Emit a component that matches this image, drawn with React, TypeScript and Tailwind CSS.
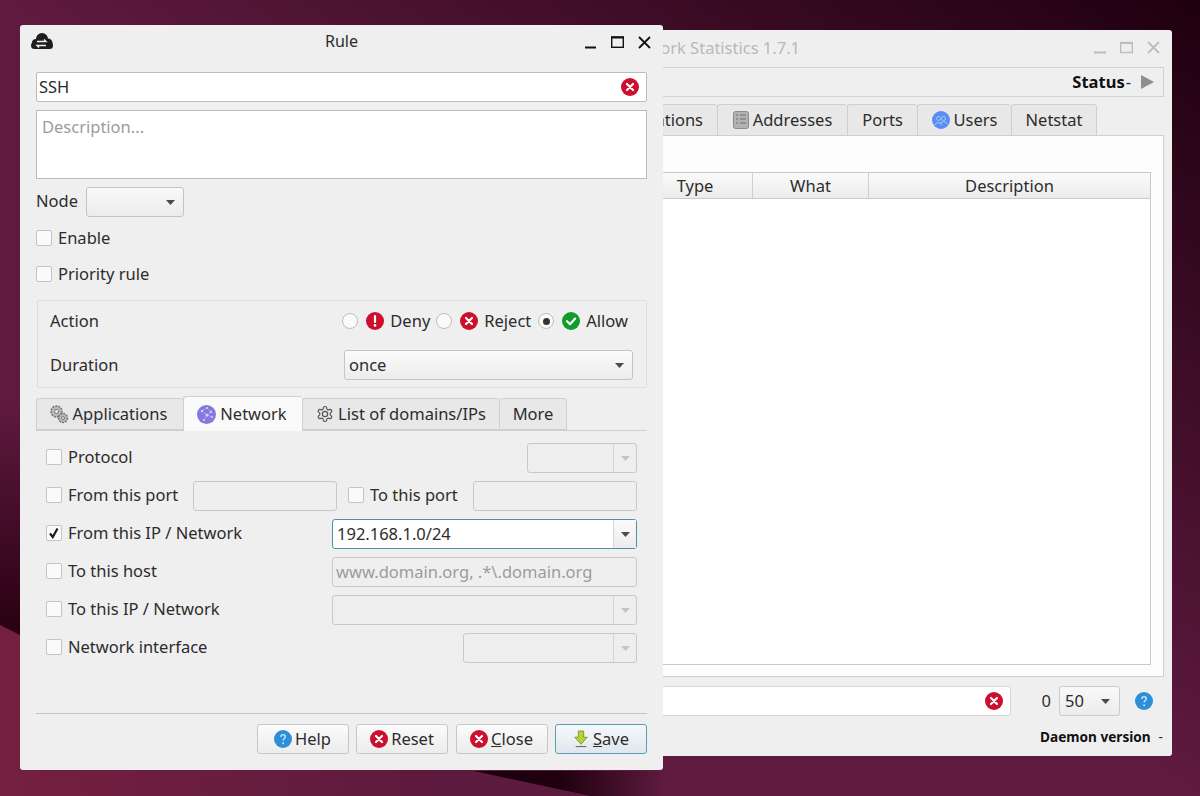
import type { ReactNode } from "react";

function ErrorIcon({ size = 18 }: { size?: number }) {
  return (
    <svg width={size} height={size} viewBox="0 0 18 18" className="shrink-0">
      <circle cx="9" cy="9" r="9" fill="#cc0f2c" />
      <path d="M6 6l6 6M12 6l-6 6" stroke="#fff" strokeWidth="2.2" strokeLinecap="round" />
    </svg>
  );
}

function DenyIcon() {
  return (
    <svg width="18" height="18" viewBox="0 0 18 18" className="shrink-0">
      <circle cx="9" cy="9" r="9" fill="#cc0f2c" />
      <path d="M9 4v6" stroke="#fff" strokeWidth="2.2" strokeLinecap="round" />
      <circle cx="9" cy="13.4" r="1.3" fill="#fff" />
    </svg>
  );
}

function AllowIcon() {
  return (
    <svg width="18" height="18" viewBox="0 0 18 18" className="shrink-0">
      <circle cx="9" cy="9" r="9" fill="#119a2e" />
      <path d="M5 9.2l3 3 5.2-5.6" stroke="#fff" strokeWidth="2.2" fill="none" strokeLinecap="round" strokeLinejoin="round" />
    </svg>
  );
}

function HelpIcon() {
  return (
    <svg width="18" height="18" viewBox="0 0 18 18" className="shrink-0">
      <circle cx="9" cy="9" r="9" fill="#2f8fd6" />
      <path d="M6.8 7c0-1.400 1-2.200 2.300-2.200s2.200.8 2.200 2c0 1.700-2.200 1.800-2.200 3.700" stroke="#bfe3fb" strokeWidth="1.5" fill="none" />
      <circle cx="9.1" cy="13.3" r="1" fill="#bfe3fb" />
    </svg>
  );
}

function Caret({ muted }: { muted?: boolean }) {
  return (
    <svg width="9" height="5" viewBox="0 0 9 5">
      <path d="M0 0h9L4.5 5z" fill={muted ? "#c4c4c4" : "#4a4a4a"} />
    </svg>
  );
}

function Check({ checked }: { checked?: boolean }) {
  return (
    <span className="w-4 h-4 shrink-0 bg-[#fafafa] border border-[#c4c4c4] rounded-[2px] flex items-center justify-center">
      {checked && (
        <svg width="12" height="12" viewBox="0 0 12 12">
          <path d="M2 6.500l2.800 3.500 4.700-8.500" stroke="#1c1c1c" strokeWidth="2.2" fill="none" />
        </svg>
      )}
    </span>
  );
}

function CheckLabel({ label, checked }: { label: string; checked?: boolean }) {
  return (
    <div className="flex items-center gap-1.5 -mt-[2px]">
      <Check checked={checked} />
      <span>{label}</span>
    </div>
  );
}

function Radio({ on }: { on?: boolean }) {
  return (
    <span className="w-4 h-4 shrink-0 rounded-full bg-[#fafafa] border border-[#bdbdbd] flex items-center justify-center">
      {on && <span className="w-[7px] h-[7px] rounded-full bg-[#333]" />}
    </span>
  );
}

function DisabledCombo({ className }: { className: string }) {
  return (
    <div className={`h-[30px] flex border border-[#c8c8c8] rounded-[3px] bg-[#eeeeee] ${className}`}>
      <div className="flex-1" />
      <div className="w-[23px] border-l border-[#d6d6d6] flex items-center justify-center">
        <Caret muted />
      </div>
    </div>
  );
}

function WinButton({ icon, children, primary }: { icon: ReactNode; children: ReactNode; primary?: boolean }) {
  return (
    <div
      className={`w-[92px] h-[30px] flex items-center justify-center gap-[3px] rounded-[3px] border ${
        primary
          ? "border-[#5d9bbd] bg-gradient-to-b from-[#f6f8f9] to-[#dfe8ee]"
          : "border-[#c6c6c6] bg-gradient-to-b from-[#fbfbfb] to-[#ececec]"
      }`}
    >
      {icon}
      <span>{children}</span>
    </div>
  );
}

function Tab({ children, active, className = "" }: { children: ReactNode; active?: boolean; className?: string }) {
  return (
    <div
      className={`flex items-center justify-center gap-1 border border-[#cfcfcf] rounded-t-[3px] ${
        active ? "h-[35px] bg-[#fafafa] border-b-0 -mb-px" : "h-[32px] bg-[#e8e8e8]"
      } ${className}`}
    >
      {children}
    </div>
  );
}

function StatsWindow() {
  return (
    <div className="absolute left-[400px] top-[30px] w-[772px] h-[726px] bg-[#efefef] rounded-[3px] flex flex-col px-2 pb-[5px]">
      <div className="h-[37px] shrink-0 flex items-center -mt-px pr-1">
        <div className="flex-1 text-[#b9b9b9] pr-[294px] whitespace-nowrap text-right">
          Network Statistics 1.7.1
        </div>
        <div className="flex items-center gap-[14px]">
          <svg width="12" height="12" viewBox="0 0 12 12">
            <path d="M0 10.500h12" stroke="#bdbdbd" strokeWidth="2" />
          </svg>
          <svg width="13" height="13" viewBox="0 0 13 13">
            <rect x="0.7" y="1.5" width="11.6" height="10" fill="none" stroke="#bdbdbd" strokeWidth="1.4" />
            <path d="M0 2h13" stroke="#bdbdbd" strokeWidth="2" />
          </svg>
          <svg width="13" height="13" viewBox="0 0 13 13">
            <path d="M1 1l11 11M12 1L1 12" stroke="#bdbdbd" strokeWidth="1.8" />
          </svg>
        </div>
      </div>

      <div className="h-[30px] mt-px shrink-0 border border-[#d2d2d2] flex items-center justify-end pr-[9px]">
        <span className="font-bold text-[#111]">Status</span>
        <span className="ml-px">-</span>
        <svg width="13" height="14" viewBox="0 0 13 14" className="ml-[10px]">
          <path d="M0 0l13 7-13 7z" fill="#8f8f8f" />
        </svg>
      </div>

      <div className="mt-[7px] shrink-0 flex justify-end pr-[67px]">
        <Tab className="w-[140px] border-r-0 justify-end pr-[14px]">Applications</Tab>
        <Tab className="w-[130px] border-r-0">
          <svg width="16" height="18" viewBox="0 0 16 18">
            <rect x="0.5" y="0.5" width="15" height="17" rx="2" fill="#b3b3b3" stroke="#8c8c8c" />
            <path d="M3 4h2M7 4h6M3 8h2M7 8h6M3 12h2M7 12h6" stroke="#6f6f6f" />
          </svg>
          Addresses
        </Tab>
        <Tab className="w-[70px] border-r-0">Ports</Tab>
        <Tab className="w-[94px] border-r-0">
          <svg width="18" height="18" viewBox="0 0 18 18">
            <circle cx="9" cy="9" r="9" fill="#5a8df0" />
            <circle cx="6.5" cy="7.5" r="2" fill="none" stroke="#a9c4f7" />
            <circle cx="11.5" cy="7.5" r="2" fill="none" stroke="#a9c4f7" />
            <path d="M3 14c0-3 7-3 7 0M8 13c0-3 7-3 7 0" fill="none" stroke="#a9c4f7" />
          </svg>
          Users
        </Tab>
        <Tab className="w-[86px]">Netstat</Tab>
      </div>

      <div className="flex-1 bg-[#fdfdfd] border border-[#cfcfcf] -mt-px flex flex-col pt-[36px] pb-[11px] pr-[12px]">
        <div className="h-[27px] shrink-0 flex justify-end bg-gradient-to-b from-[#fafafa] to-[#ececec] border border-[#c9c9c9]">
          <div className="w-[114px] flex items-center justify-center">Type</div>
          <div className="w-[116px] flex items-center justify-center border-l border-[#cfcfcf]">What</div>
          <div className="w-[282px] flex items-center justify-center border-l border-[#cfcfcf]">Description</div>
        </div>
        <div className="flex-1 bg-white border border-t-0 border-[#c9c9c9]" />
      </div>

      <div className="h-[30px] mt-[9px] shrink-0 flex items-center">
        <div className="flex-1 h-full bg-white border border-[#d6d6d6] rounded-[3px] flex items-center justify-end pr-[7px] mr-[31px]">
          <ErrorIcon />
        </div>
        <span className="mr-2">0</span>
        <div className="w-[61px] h-full border border-[#cbcbcb] rounded-[3px] bg-gradient-to-b from-[#f9f9f9] to-[#ececec] flex items-center justify-between pl-[5px] pr-[9px]">
          50 <Caret />
        </div>
        <div className="ml-[15px] mr-[11px]">
          <HelpIcon />
        </div>
      </div>

      <div className="flex justify-end items-center h-[28px] shrink-0 pr-[1px] mt-[7px] text-[13.6px]">
        <span className="font-bold text-[#111]">Daemon version</span>
        <span className="ml-2">-</span>
      </div>
    </div>
  );
}

function RuleDialog() {
  return (
    <div className="absolute left-[20px] top-[25px] w-[643px] h-[745px] bg-[#efefef] rounded-[3px] flex flex-col px-4">
      <div className="h-[47px] shrink-0 flex items-center relative">
        <svg width="22" height="17" viewBox="0 0 22 17" className="-ml-[5px] -mt-[15px]">
          <circle cx="11" cy="6" r="6" fill="#1e1e1e" />
          <circle cx="17" cy="10" r="4.500" fill="#1e1e1e" />
          <circle cx="5" cy="10" r="4" fill="#1e1e1e" />
          <rect x="0" y="9" width="22" height="7" rx="3.500" fill="#1e1e1e" />
          <path d="M6 8.500h9l-2-2M15 12.500H6l2 2" stroke="#f2f2f2" strokeWidth="1.400" fill="none" />
        </svg>
        <div className="absolute inset-x-0 top-[5px] text-center text-[16px]">Rule</div>
        <div className="ml-auto flex items-center gap-[14px] -mt-[12px] -mr-[4px]">
          <svg width="13" height="13" viewBox="0 0 13 13">
            <path d="M1 11.500h11" stroke="#111" strokeWidth="2" />
          </svg>
          <svg width="13" height="13" viewBox="0 0 13 13">
            <rect x="0.7" y="1" width="11.6" height="10.3" fill="none" stroke="#111" strokeWidth="1.4" />
            <path d="M0 1.500h13" stroke="#111" strokeWidth="2" />
          </svg>
          <svg width="13" height="13" viewBox="0 0 13 13">
            <path d="M1 1l11 11M12 1L1 12" stroke="#111" strokeWidth="1.8" />
          </svg>
        </div>
      </div>

      <div className="h-[30px] shrink-0 bg-white border border-[#bcbcbc] rounded-[2px] flex items-center justify-between pl-[2px] pr-[7px]">
        SSH <ErrorIcon />
      </div>
      <div className="h-[69px] shrink-0 mt-2 bg-white border border-[#bcbcbc] pl-[5px] pt-[5px] text-[#9c9c9c]">
        Description...
      </div>

      <div className="mt-2 h-[30px] shrink-0 flex items-center">
        <span className="w-[50px] shrink-0 -mt-[2px]">Node</span>
        <div className="w-[98px] h-full border border-[#c4c4c4] rounded-[3px] bg-gradient-to-b from-[#f9f9f9] to-[#ececec] flex items-center justify-end pr-2">
          <Caret />
        </div>
      </div>
      <div className="mt-[7px] h-[29px] shrink-0 flex items-center">
        <CheckLabel label="Enable" />
      </div>
      <div className="mt-[7px] h-[29px] shrink-0 flex items-center">
        <CheckLabel label="Priority rule" />
      </div>

      <div className="mt-[11px] h-[88px] shrink-0 ml-px border border-[#dcdcdc] rounded-[2px] pl-3 pr-[13px] flex flex-col">
        <div className="h-[40px] shrink-0 flex items-center justify-between">
          <span>Action</span>
          <div className="flex items-center pr-[5px]">
            <Radio />
            <span className="ml-2 mr-[6px]"><DenyIcon /></span>
            <span className="mr-[6px]">Deny</span>
            <Radio />
            <span className="ml-2 mr-[6px]"><ErrorIcon /></span>
            <span className="mr-[7px]">Reject</span>
            <Radio on />
            <span className="ml-2 mr-[6px]"><AllowIcon /></span>
            <span>Allow</span>
          </div>
        </div>
        <div className="mt-[9px] flex items-center justify-between">
          <span>Duration</span>
          <div className="w-[289px] h-[30px] border border-[#c4c4c4] rounded-[3px] bg-gradient-to-b from-[#fbfbfb] to-[#ececec] flex items-center justify-between pl-[4px] pr-[8px]">
            once <Caret />
          </div>
        </div>
      </div>

      <div className="mt-[10px] shrink-0 flex items-end border-b border-[#cfcfcf] h-[33px]">
        <Tab className="w-[147px] border-r-0 pr-[4px]">
          <svg width="20" height="20" viewBox="0 0 20 20">
            <circle cx="7.5" cy="7.5" r="5.5" fill="#b9b9b9" stroke="#777" strokeWidth="1.5" strokeDasharray="2 1" />
            <circle cx="7.5" cy="7.5" r="2" fill="#efefef" stroke="#777" />
            <circle cx="14" cy="14" r="4.5" fill="#b9b9b9" stroke="#777" strokeWidth="1.5" strokeDasharray="2 1" />
            <circle cx="14" cy="14" r="1.5" fill="#efefef" stroke="#777" />
          </svg>
          Applications
        </Tab>
        <Tab active className="w-[119px] border-r-0 pr-[2px]">
          <svg width="19" height="19" viewBox="0 0 19 19">
            <circle cx="9.5" cy="9.5" r="9.5" fill="#8479de" />
            <path d="M5 6l5-3 4 4-4 3-5-4zM10 10l-3 5M10 10l5 2" stroke="#a9a1ea" fill="none" />
            <circle cx="10" cy="10" r="1.5" fill="#d4cff6" />
            <circle cx="5" cy="6" r="1.2" fill="#d4cff6" />
            <circle cx="14" cy="7" r="1.2" fill="#d4cff6" />
            <circle cx="10" cy="3" r="1.1" fill="#d4cff6" />
            <circle cx="7" cy="15" r="1.1" fill="#d4cff6" />
            <circle cx="15" cy="12" r="1.1" fill="#d4cff6" />
          </svg>
          Network
        </Tab>
        <Tab className="w-[197px] border-r-0">
          <svg width="18" height="18" viewBox="0 0 24 24" fill="none" stroke="#555" strokeWidth="1.6">
            <path d="M12.22 2h-.44a2 2 0 0 0-2 2v.18a2 2 0 0 1-1 1.73l-.43.25a2 2 0 0 1-2 0l-.15-.08a2 2 0 0 0-2.73.73l-.22.38a2 2 0 0 0 .73 2.73l.15.1a2 2 0 0 1 1 1.72v.51a2 2 0 0 1-1 1.74l-.15.09a2 2 0 0 0-.73 2.73l.22.38a2 2 0 0 0 2.73.73l.15-.08a2 2 0 0 1 2 0l.43.25a2 2 0 0 1 1 1.73V20a2 2 0 0 0 2 2h.44a2 2 0 0 0 2-2v-.18a2 2 0 0 1 1-1.73l.43-.25a2 2 0 0 1 2 0l.15.08a2 2 0 0 0 2.73-.73l.22-.39a2 2 0 0 0-.73-2.73l-.15-.08a2 2 0 0 1-1-1.74v-.5a2 2 0 0 1 1-1.74l.15-.09a2 2 0 0 0 .73-2.73l-.22-.38a2 2 0 0 0-2.73-.73l-.15.08a2 2 0 0 1-2 0l-.43-.25a2 2 0 0 1-1-1.73V4a2 2 0 0 0-2-2z" />
            <circle cx="12" cy="12" r="3.5" />
          </svg>
          List of domains/IPs
        </Tab>
        <Tab className="w-[68px]">More</Tab>
      </div>

      <div className="mt-3 pl-[10px] pr-[10px] flex flex-col gap-2 shrink-0">
        <div className="h-[30px] flex items-center justify-between">
          <CheckLabel label="Protocol" />
          <DisabledCombo className="w-[110px]" />
        </div>
        <div className="h-[30px] flex items-center">
          <div className="w-[147px] shrink-0">
            <CheckLabel label="From this port" />
          </div>
          <div className="w-[144px] h-full border border-[#c8c8c8] rounded-[3px]" />
          <div className="ml-[11px]">
            <CheckLabel label="To this port" />
          </div>
          <div className="w-[164px] h-full ml-auto border border-[#c8c8c8] rounded-[3px]" />
        </div>
        <div className="h-[30px] flex items-center justify-between">
          <CheckLabel label="From this IP / Network" checked />
          <div className="w-[305px] h-full flex border border-[#4d8fae] rounded-[3px] bg-white">
            <div className="flex-1 flex items-center pl-[4px]">192.168.1.0/24</div>
            <div className="w-[23px] border-l border-[#d6d6d6] bg-gradient-to-b from-[#fbfbfb] to-[#ececec] flex items-center justify-center">
              <Caret />
            </div>
          </div>
        </div>
        <div className="h-[30px] flex items-center justify-between">
          <CheckLabel label="To this host" />
          <div className="w-[305px] h-full border border-[#c8c8c8] rounded-[3px] flex items-center pl-[3px] text-[#9c9c9c]">
            www.domain.org, .*\.domain.org
          </div>
        </div>
        <div className="h-[30px] flex items-center justify-between">
          <CheckLabel label="To this IP / Network" />
          <DisabledCombo className="w-[305px]" />
        </div>
        <div className="h-[30px] flex items-center justify-between">
          <CheckLabel label="Network interface" />
          <DisabledCombo className="w-[174px]" />
        </div>
      </div>

      <div className="mt-auto border-t border-[#c4c4c4] pt-[10px] pb-4 flex justify-end gap-[7.5px] shrink-0">
        <WinButton icon={<HelpIcon />}>Help</WinButton>
        <WinButton icon={<ErrorIcon />}>Reset</WinButton>
        <WinButton icon={<ErrorIcon />}>
          <span className="underline">C</span>lose
        </WinButton>
        <WinButton
          primary
          icon={
            <svg width="16" height="20" viewBox="0 0 18 20" className="mr-[1px]">
              <path d="M6 1h6v7h4l-7 8-7-8h4z" fill="#b5d334" stroke="#7d8f2a" />
              <path d="M3 18.500h12" stroke="#6d6d6d" strokeWidth="1.2" />
            </svg>
          }
        >
          <span className="underline">S</span>ave
        </WinButton>
      </div>
    </div>
  );
}

function Wallpaper() {
  return (
    <svg width="1200" height="796" viewBox="0 0 1200 796" className="absolute inset-0">
      <defs>
        <linearGradient id="base" gradientUnits="userSpaceOnUse" x1="1200" y1="0" x2="833" y2="553">
          <stop offset="0" stopColor="#1f000f" />
          <stop offset="1" stopColor="#5f1a40" />
        </linearGradient>
        <linearGradient id="left" gradientUnits="userSpaceOnUse" x1="0" y1="400" x2="0" y2="630">
          <stop offset="0" stopColor="#2a0012" stopOpacity="0" />
          <stop offset="1" stopColor="#2a0012" />
        </linearGradient>
        <linearGradient id="shard" gradientUnits="userSpaceOnUse" x1="560" y1="0" x2="665" y2="0">
          <stop offset="0" stopColor="#1f000e" />
          <stop offset="1" stopColor="#1f000e" stopOpacity="0" />
        </linearGradient>
        <linearGradient id="low" gradientUnits="userSpaceOnUse" x1="0" y1="0" x2="450" y2="0">
          <stop offset="0" stopColor="#75203f" />
          <stop offset="1" stopColor="#5c1a3e" />
        </linearGradient>
      </defs>
      <rect width="1200" height="796" fill="url(#base)" />
      <rect y="400" width="30" height="240" fill="url(#left)" />
      <path d="M473 771L590 796H670V771z" fill="url(#shard)" />
      <path d="M0 625L20 635L473 771L590 796H0z" fill="url(#low)" />
    </svg>
  );
}

export default function App() {
  return (
    <div className="relative w-[1200px] h-[796px] overflow-hidden font-['Noto_Sans',sans-serif] text-[16.5px] leading-[22px] text-[#2c2c2c] bg-[#5f1a40]">
      <Wallpaper />
      <StatsWindow />
      <RuleDialog />
    </div>
  );
}
